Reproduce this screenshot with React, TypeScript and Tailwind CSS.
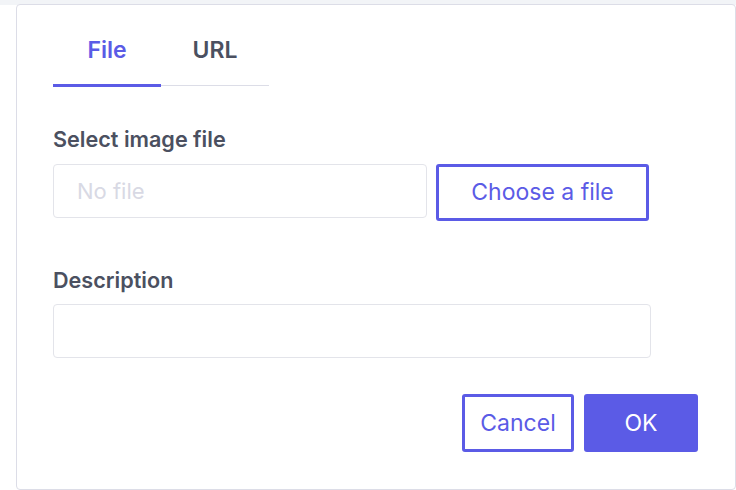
const INDIGO = "text-[#5b5be6]"

const App = () => {
  return (
    <div className="min-h-[490px] bg-white font-['Inter',sans-serif]">
      <div className="h-[5px] bg-[#f2f4f7]" />
      <div className="-mt-px ml-[16px] h-[486px] w-[720px] rounded-[4px] border border-[#dcdde7] bg-white pl-[36px] pt-[31px]">
        <div className="flex items-start">
          <button className={`flex h-[51px] w-[108px] justify-center border-b-[3px] border-[#5b5be6] text-[23px] leading-[28px] font-semibold ${INDIGO}`}>
            File
          </button>
          <button className="flex h-[50px] w-[108px] justify-center border-b border-[#dcdde7] text-[23px] leading-[28px] font-semibold text-[#4b5060]">
            URL
          </button>
        </div>

        <label className="mt-[38px] block text-[21.6px] leading-[28px] font-semibold text-[#4b5060]">
          Select image file
        </label>
        <div className="mt-[11px] flex items-start gap-[9px]">
          <div className="flex h-[54px] w-[374px] items-center rounded-[4px] border border-[#e3e4ea] px-[23px] text-[22px] text-[#d8d9e4]">
            No file
          </div>
          <button className={`h-[57px] w-[213px] rounded-[3px] border-[3px] border-[#5b5be6] text-[23px] ${INDIGO}`}>
            Choose a file
          </button>
        </div>

        <label className="mt-[45px] block text-[21.6px] leading-[28px] font-semibold text-[#4b5060]">
          Description
        </label>
        <input className="mt-[10px] block h-[54px] w-[598px] rounded-[4px] border border-[#e3e4ea] px-[23px] text-[22px] outline-none" />

        <div className="mt-[36px] flex w-[645px] justify-end gap-[10px]">
          <button className={`h-[58px] w-[112px] rounded-[3px] border-[3px] border-[#5b5be6] bg-white text-[23px] ${INDIGO}`}>
            Cancel
          </button>
          <button className="h-[58px] w-[114px] rounded-[3px] bg-[#5b5be6] text-[23px] text-white">
            OK
          </button>
        </div>
      </div>
    </div>
  )
}

export default App
